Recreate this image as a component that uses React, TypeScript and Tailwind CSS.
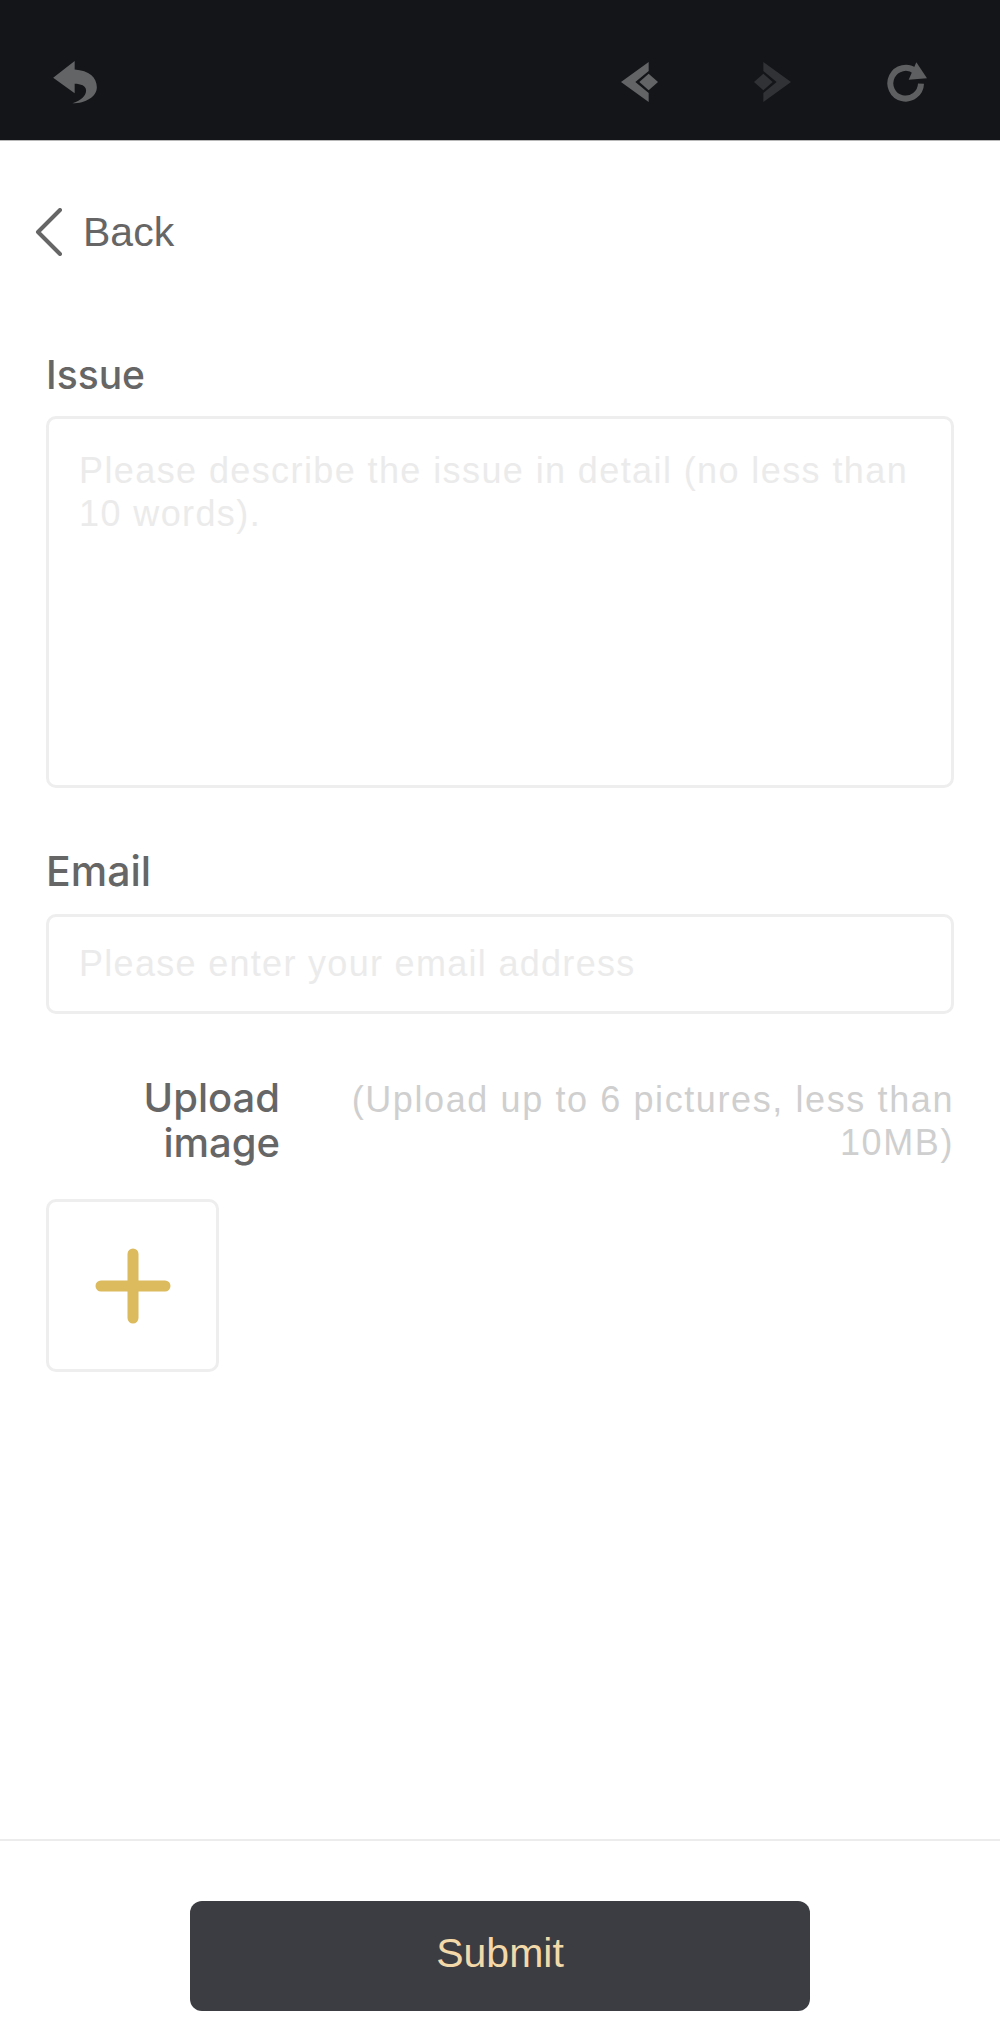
import React from "react";

const font = { fontFamily: '"Liberation Sans", Arial, sans-serif' };
const labelFont = { fontFamily: '"Inter", sans-serif' };

const BackArrow = () => (
  <svg width="44" height="43" viewBox="68 122 130 128">
    <path
      d="M68 172 L132 122 L132 147 C175 150 198 170 198 200 C198 228 165 248 125 248 C150 240 166 226 166 210 C166 196 150 190 132 190 L132 218 Z"
      fill="#636466"
    />
  </svg>
);

const Diamond = ({ color, flip }: { color: string; flip?: boolean }) => (
  <svg width="37" height="40" viewBox="65 65 111 120" className={flip ? "-scale-x-100" : ""}>
    <path d="M65 125 L148 65 L148 92 L108 125 L148 158 L148 185 Z" fill={color} />
    <path d="M120 125 L148 100 L176 125 L148 150 Z" fill={color} />
  </svg>
);

const Refresh = () => (
  <svg width="40" height="40" viewBox="860 65 120 120">
    <path d="M945 93 A46 46 0 1 0 962 130" fill="none" stroke="#5e5f61" strokeWidth="18" />
    <path d="M948 66 L980 114 L925 118 Z" fill="#5e5f61" />
  </svg>
);

export default function App() {
  return (
    <div className="flex h-[2030px] w-[1000px] flex-col bg-white" style={font}>
      <div className="flex h-[141px] items-start justify-between border-b border-b-[#b8b8b8] bg-[#141518] pt-[61px] pl-[53px] pr-[73px]">
        <BackArrow />
        <div className="flex items-center gap-[96px] pt-px">
          <Diamond color="#636466" />
          <Diamond color="#303235" flip />
          <Refresh />
        </div>
      </div>

      <div className="flex items-center pt-[67px] pl-[35px] text-[41px] leading-[48px] text-[#666]">
        <svg width="28" height="48" viewBox="0 0 28 48">
          <path d="M25 2 L3 24 L25 46" fill="none" stroke="#666" strokeWidth="4" strokeLinecap="round" strokeLinejoin="round" />
        </svg>
        <span className="ml-[20px]">Back</span>
      </div>

      <div className="flex flex-1 flex-col px-[46px]">
        <label className="mt-[95px] text-[39px] leading-[48px] font-medium text-[#666]" style={labelFont}>
          Issue
        </label>
        <div className="mt-[17px] h-[372px] rounded-[10px] border-[3px] border-[#eeeeee] pt-[30px] pl-[30px] pr-[30px] text-[36px] leading-[43px] tracking-[1.4px] text-[#ebebeb]">
          Please describe the issue in detail (no less than 10 words).
        </div>

        <label className="mt-[59px] text-[41px] leading-[48px] font-medium text-[#666]" style={labelFont}>
          Email
        </label>
        <div className="mt-[19px] flex h-[100px] items-center rounded-[10px] border-[3px] border-[#eeeeee] pl-[30px] text-[36px] tracking-[1.3px] text-[#ebebeb]">
          Please enter your email address
        </div>

        <div className="mt-[61px] flex items-start justify-between">
          <div className="w-[234px] text-right text-[40px] leading-[45px] font-medium text-[#666]" style={labelFont}>
            Upload image
          </div>
          <div className="w-[620px] pt-[3px] text-right text-[36px] leading-[43px] tracking-[1.6px] text-[#cfcfcf]">
            (Upload up to 6 pictures, less than 10MB)
          </div>
        </div>

        <div className="mt-[34px] flex h-[173px] w-[173px] items-center justify-center rounded-[10px] border-[3px] border-[#eeeeee]">
          <svg width="76" height="76" viewBox="0 0 76 76">
            <path d="M38 6 V70 M6 38 H70" fill="none" stroke="#dcbb5e" strokeWidth="11" strokeLinecap="round" />
          </svg>
        </div>
      </div>

      <div className="flex h-[191px] justify-center border-t-2 border-t-[#ececec] pt-[60px]">
        <button className="h-[110px] w-[620px] rounded-[12px] bg-[#3c3d42] pb-[5px] text-[41px] text-[#f3d9a9]">Submit</button>
      </div>
    </div>
  );
}
